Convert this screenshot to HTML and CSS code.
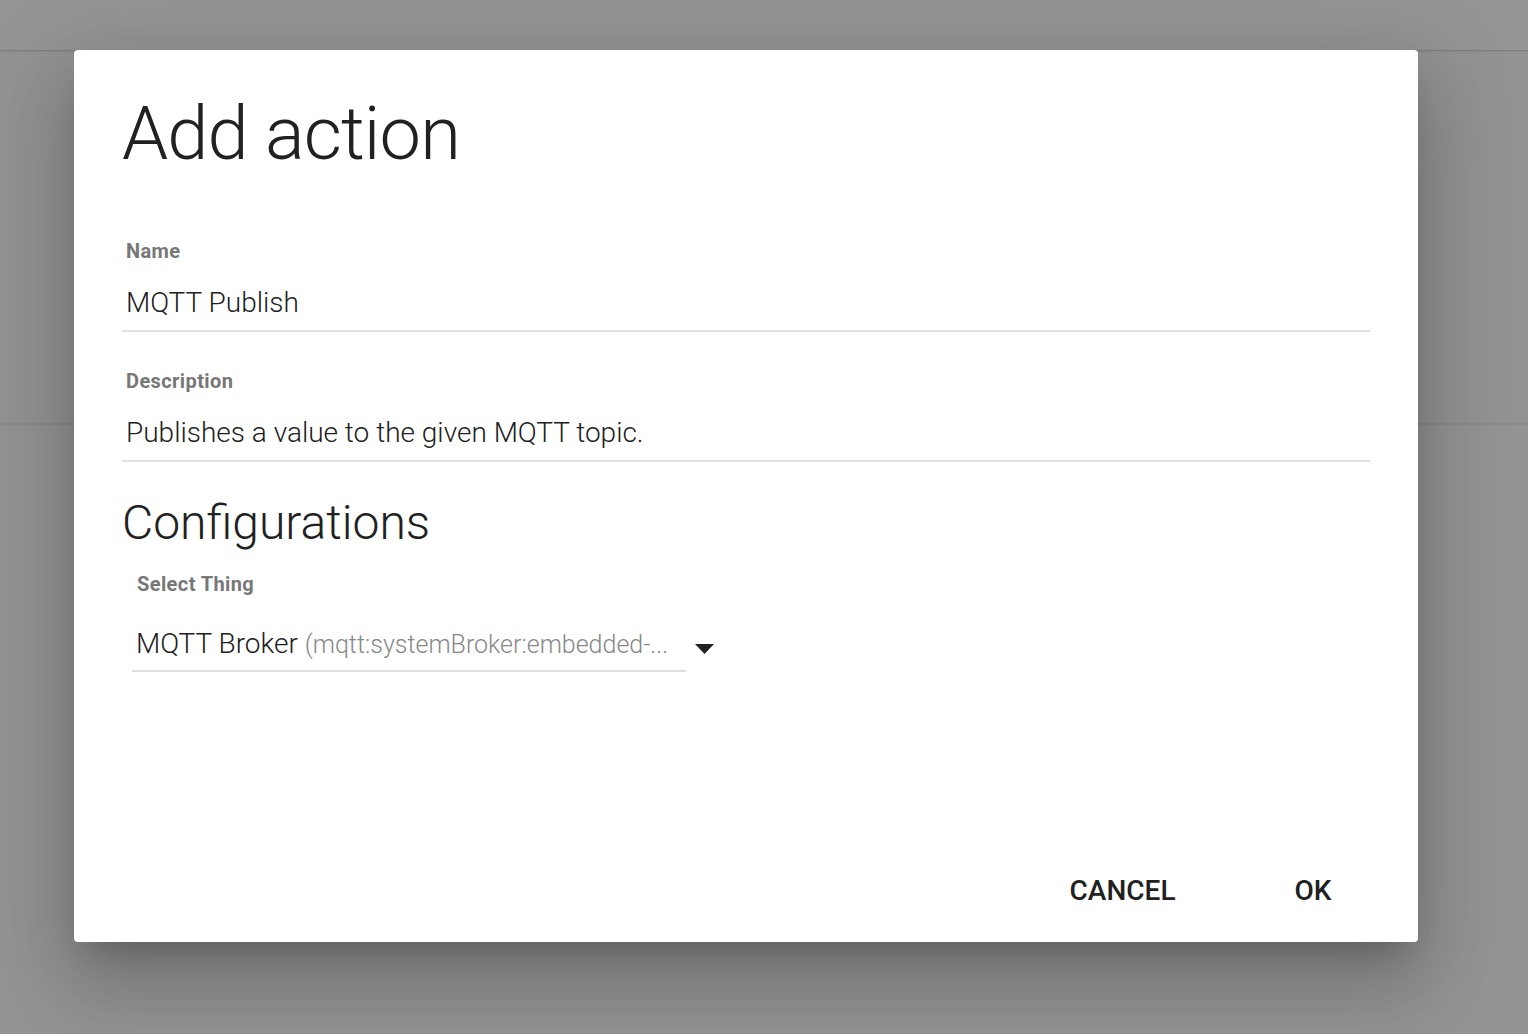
FILE: index.html
```html
<!DOCTYPE html>
<html lang="en">
<head>
<meta charset="utf-8">
<title>Add action</title>
<link rel="stylesheet" href="styles.css">
</head>
<body>
<div class="page">
  <div class="topbar"></div>
  <div class="card"></div>
</div>

<div class="dialog" role="dialog">
  <h1 class="dialog-title">Add action</h1>

  <div class="form">
    <div class="field">
      <div class="field-label">Name</div>
      <div class="field-input">MQTT Publish</div>
    </div>
    <div class="field">
      <div class="field-label">Description</div>
      <div class="field-input">Publishes a value to the given MQTT topic.</div>
    </div>
  </div>

  <h2 class="section-title">Configurations</h2>

  <div class="select-field">
    <div class="field-label">Select Thing</div>
    <div class="select-row">
      <div class="select-box">MQTT Broker <span class="select-sub">(mqtt:systemBroker:embedded-...</span></div>
      <svg class="select-arrow" width="19" height="10" viewBox="0 0 19 10"><polygon points="0,0 19,0 9.5,10" fill="#212121"/></svg>
    </div>
  </div>

  <div class="actions">
    <button class="btn btn-cancel">CANCEL</button>
    <button class="btn btn-ok">OK</button>
  </div>
</div>
</body>
</html>
```

FILE: styles.css
```css
* { box-sizing: border-box; }

html, body {
  margin: 0;
  padding: 0;
}

body {
  width: 1528px;
  height: 1034px;
  overflow: hidden;
  background: #949494;
  font-family: Roboto, "Liberation Sans", sans-serif;
  position: relative;
}

.page {
  width: 100%;
}

.topbar {
  height: 50px;
  background: #959595;
  box-shadow: 0 1px 2px rgba(0, 0, 0, 0.12);
  position: relative;
}

.card {
  height: 374px;
  background: #939393;
  border-top: 1px solid #8a8a8a;
  border-bottom: 1px solid #8b8b8b;
  box-shadow: 0 1px 2px rgba(0, 0, 0, 0.08);
}

.dialog {
  position: absolute;
  left: 74px;
  top: 50px;
  width: 1344px;
  height: 892px;
  background: #ffffff;
  border-radius: 4px;
  padding: 40px 48px 20.6px;
  display: flex;
  flex-direction: column;
  box-shadow:
    0 22px 30px -14px rgba(0, 0, 0, 0.2),
    0 48px 76px 6px rgba(0, 0, 0, 0.12),
    0 18px 92px 16px rgba(0, 0, 0, 0.12);
}

.dialog-title {
  margin: 0;
  font-size: 74px;
  line-height: 88px;
  font-weight: 300;
  color: #212121;
  letter-spacing: -0.9px;
}

.form {
  margin-top: 60.5px;
}

.field + .field {
  margin-top: 36.5px;
}

.field-label {
  font-size: 20px;
  line-height: 24px;
  font-weight: 700;
  color: #777777;
  letter-spacing: 0.4px;
  padding-left: 4px;
}

.field-input {
  margin-top: 22.5px;
  font-size: 28px;
  line-height: 36px;
  font-weight: 300;
  color: #212121;
  padding: 0 0 9px 4px;
  border-bottom: 2px solid #e0e0e0;
}

.section-title {
  margin: 32.6px 0 0;
  font-size: 48px;
  line-height: 56px;
  font-weight: 300;
  color: #212121;
}

.select-field {
  margin-top: 21.6px;
  padding-left: 10px;
}

.select-field .field-label {
  padding-left: 5px;
}

.select-row {
  display: flex;
  align-items: flex-start;
  margin-top: 30px;
}

.select-box {
  width: 554px;
  font-size: 28px;
  line-height: 36px;
  font-weight: 300;
  color: #212121;
  padding: 0 0 6.8px 4px;
  border-bottom: 2px solid #e0e0e0;
  white-space: nowrap;
  overflow: hidden;
}

.select-sub {
  font-size: 25px;
  color: #888888;
}

.select-arrow {
  margin-left: 9px;
  margin-top: 18.3px;
  flex: none;
}

.actions {
  margin-top: auto;
  display: flex;
  justify-content: flex-end;
  gap: 42px;
}

.btn {
  border: 0;
  background: transparent;
  font-family: Roboto, "Liberation Sans", sans-serif;
  font-size: 28px;
  line-height: 36px;
  font-weight: 500;
  color: #212121;
  padding: 12px 38.5px;
  border-radius: 4px;
  cursor: pointer;
}
```
